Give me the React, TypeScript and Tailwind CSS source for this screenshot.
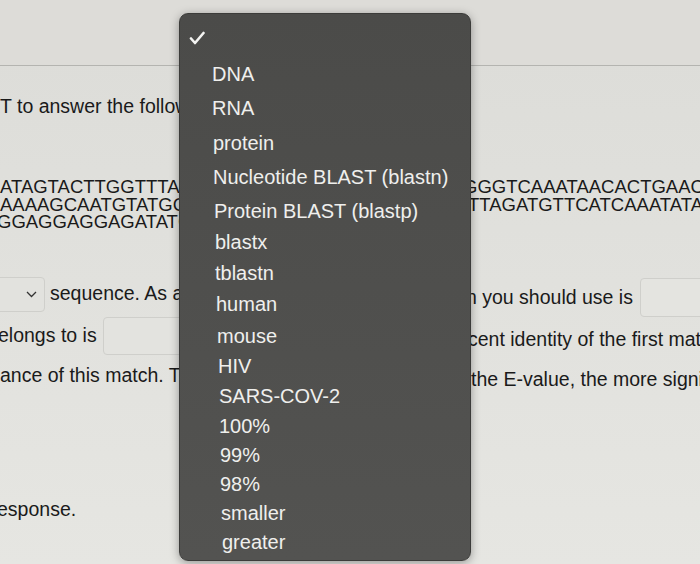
import React from "react";

const options = [
  { label: "DNA", row: "h-[35px] pl-[32px]" },
  { label: "RNA", row: "h-[34px] pl-[32px]" },
  { label: "protein", row: "h-[35px] pl-[33px]" },
  { label: "Nucleotide BLAST (blastn)", row: "h-[34px] pl-[33px]" },
  { label: "Protein BLAST (blastp)", row: "h-[33px] pl-[34px]" },
  { label: "blastx", row: "h-[30px] pl-[35px]" },
  { label: "tblastn", row: "h-[31px] pl-[35px]" },
  { label: "human", row: "h-[32px] pl-[36px]" },
  { label: "mouse", row: "h-[31px] pl-[37px]" },
  { label: "HIV", row: "h-[30px] pl-[38px]" },
  { label: "SARS-COV-2", row: "h-[30px] pl-[39px]" },
  { label: "100%", row: "h-[29px] pl-[39px]" },
  { label: "99%", row: "h-[29px] pl-[40px]" },
  { label: "98%", row: "h-[29px] pl-[40px]" },
  { label: "smaller", row: "h-[29px] pl-[41px]" },
  { label: "greater", row: "h-[29px] pl-[42px]" },
];

function Menu() {
  return (
    <div className="absolute left-[179px] top-[13px] w-[292px] h-[548px] rounded-[9px] bg-gradient-to-b from-[#4b4b49] to-[#535351] border border-[#3c3c3a] shadow-[0_2px_10px_rgba(0,0,0,0.35)] pt-[6px] text-[#efefed] text-[20px]">
      <div className="h-[36px] pl-[9px] flex items-center">
        <svg width="16" height="14" viewBox="0 0 16 14" fill="none">
          <path d="M2 7.5 L6 12 L14.5 2" stroke="#f4f4f2" strokeWidth="2.6" strokeLinecap="round" strokeLinejoin="round" />
        </svg>
      </div>
      {options.map((o) => (
        <div key={o.label} className={`${o.row} flex items-center whitespace-nowrap`}>
          {o.label}
        </div>
      ))}
    </div>
  );
}

export default function App() {
  return (
    <div
      className="relative w-[700px] h-[564px] overflow-hidden bg-gradient-to-b from-[#dcdcd8] to-[#e6e6e2] text-[#1a1a1a] text-[19.5px]"
      style={{ fontFamily: '"Liberation Sans", Arial, sans-serif' }}
    >
      <div className="h-[66px] border-b border-[#b4b4b0] bg-[#dddcd8]" />
      <div className="flex">
        <div className="w-[179px] overflow-hidden whitespace-nowrap">
          <div className="mt-[28px] leading-[24px]">T to answer the following</div>
          <div className="mt-[60px] text-[18.5px] leading-[17.5px]">
            <div>ATAGTACTTGGTTTACG</div>
            <div>AAAAGCAATGTATGC</div>
            <div className="-ml-[3px]">GGAGGAGGAGATATG</div>
          </div>
          <div className="mt-[46px] h-[35px] flex items-center">
            <div className="-ml-[6px] w-[51px] h-[35px] border border-[#cfcfcb] rounded-[4px] bg-[#e2e2de] flex items-center justify-end pr-[7px] shrink-0">
              <svg width="11" height="7" viewBox="0 0 11 7" fill="none">
                <path d="M1 1 L5.5 5.5 L10 1" stroke="#333" strokeWidth="1.3" />
              </svg>
            </div>
            <span className="ml-[5px]">sequence. As a</span>
          </div>
          <div className="mt-[5px] h-[38px] flex items-center">
            <span className="-ml-[2px]">elongs to is</span>
            <div className="ml-[6px] w-[90px] h-[38px] border border-[#cfcfcb] rounded-[4px] bg-[#e3e3df] shrink-0" />
          </div>
          <div className="mt-[8px] leading-[24px]">ance of this match. The</div>
          <div className="mt-[110px] leading-[24px] -ml-[3px]">esponse.</div>
        </div>
        <div className="w-[292px]" />
        <div className="flex-1 overflow-hidden whitespace-nowrap">
          <div className="mt-[112px] text-[18.5px] leading-[17.5px]">
            <div className="-ml-[8px]">GGGTCAAATAACACTGAACT</div>
            <div className="-ml-[3px]">TTAGATGTTCATCAAATATA</div>
          </div>
          <div className="mt-[65px] h-[39px] flex items-center">
            <span className="-ml-[5px]">n you should use is</span>
            <div className="ml-[7px] w-[90px] h-[39px] border border-[#cfcfcb] rounded-[4px] bg-[#e4e4e0] shrink-0" />
          </div>
          <div className="mt-[10px] leading-[24px] -ml-[3px]">cent identity of the first match</div>
          <div className="mt-[16px] leading-[24px]">the E-value, the more significant</div>
        </div>
      </div>
      <Menu />
    </div>
  );
}
